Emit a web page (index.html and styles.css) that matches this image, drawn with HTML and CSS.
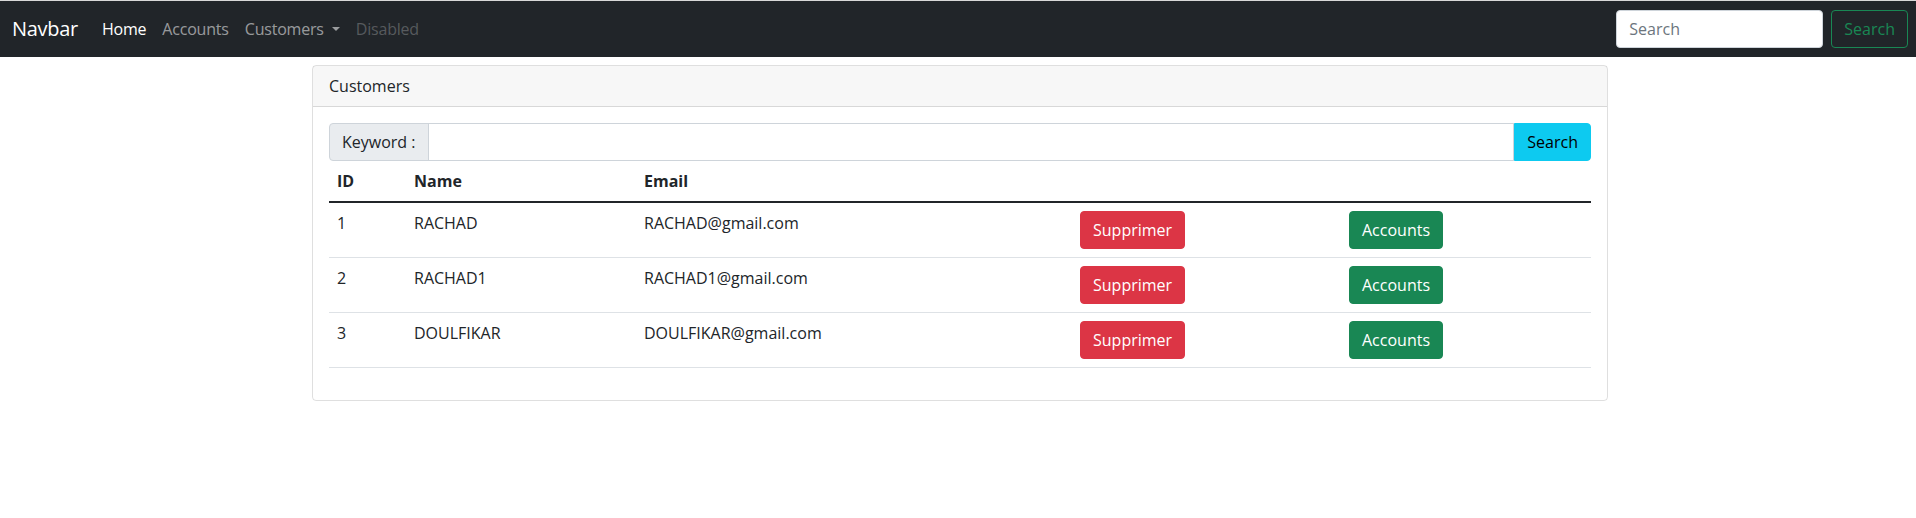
FILE: index.html
```html
<!DOCTYPE html>
<html lang="en">
<head>
  <meta charset="UTF-8">
  <meta name="viewport" content="width=device-width, initial-scale=1.0">
  <title>Customers</title>
  <link rel="stylesheet" href="styles.css">
</head>
<body>

  <nav class="navbar">
    <div class="nav-left">
      <a class="brand" href="#">Navbar</a>
      <ul class="nav-links">
        <li><a class="active" href="#">Home</a></li>
        <li><a href="#">Accounts</a></li>
        <li><a class="dropdown" href="#">Customers</a></li>
        <li><a class="disabled">Disabled</a></li>
      </ul>
    </div>
    <form class="nav-search">
      <input type="search" placeholder="Search">
      <button type="button" class="btn btn-outline-success">Search</button>
    </form>
  </nav>

  <div class="card">
    <div class="card-header">Customers</div>
    <div class="card-body">
      <div class="input-group">
        <span class="input-label">Keyword :</span>
        <input type="text" class="input-field">
        <button type="button" class="btn btn-info">Search</button>
      </div>
      <table class="table">
        <thead>
          <tr>
            <th class="col-id">ID</th>
            <th class="col-name">Name</th>
            <th class="col-email">Email</th>
            <th class="col-del"></th>
            <th class="col-acc"></th>
          </tr>
        </thead>
        <tbody>
          <tr>
            <td>1</td>
            <td>RACHAD</td>
            <td>RACHAD@gmail.com</td>
            <td><button class="btn btn-danger">Supprimer</button></td>
            <td><button class="btn btn-success">Accounts</button></td>
          </tr>
          <tr>
            <td>2</td>
            <td>RACHAD1</td>
            <td>RACHAD1@gmail.com</td>
            <td><button class="btn btn-danger">Supprimer</button></td>
            <td><button class="btn btn-success">Accounts</button></td>
          </tr>
          <tr>
            <td>3</td>
            <td>DOULFIKAR</td>
            <td>DOULFIKAR@gmail.com</td>
            <td><button class="btn btn-danger">Supprimer</button></td>
            <td><button class="btn btn-success">Accounts</button></td>
          </tr>
        </tbody>
      </table>
    </div>
  </div>

</body>
</html>
```

FILE: styles.css
```css
body {
  margin: 0;
  border-top: 1px solid #d8d8d8;
  font-family: "Open Sans", "Liberation Sans", sans-serif;
  font-size: 16px;
  line-height: 1.5;
  color: #212529;
  background-color: #fff;
}
a {
  text-decoration: none;
}
.navbar {
  display: flex;
  align-items: center;
  justify-content: space-between;
  padding: 8px 8px 8px 12px;
  background-color: #212529;
}
.nav-left {
  display: flex;
  align-items: center;
}
.brand {
  margin-right: 16px;
  padding: 5px 0;
  font-size: 20px;
  line-height: 30px;
  letter-spacing: -0.3px;
  color: #fff;
}
.nav-links {
  display: flex;
  margin: 0;
  padding: 0;
  list-style: none;
}
.nav-links a {
  display: block;
  padding: 8px;
  letter-spacing: -0.2px;
  color: rgba(255, 255, 255, 0.55);
}
.nav-links a.active {
  color: #fff;
}
.nav-links a.disabled {
  color: rgba(255, 255, 255, 0.25);
}
.nav-links a.dropdown::after {
  content: "";
  display: inline-block;
  margin-left: 8px;
  vertical-align: 0.255em;
  border-top: 0.3em solid;
  border-right: 0.3em solid transparent;
  border-left: 0.3em solid transparent;
}
.nav-search {
  display: flex;
}
.nav-search input {
  width: 207px;
  margin-right: 8px;
  padding: 6px 12px;
  border: 1px solid #ced4da;
  border-radius: 4px;
  font: inherit;
  color: #212529;
  box-sizing: border-box;
}
.nav-search input::placeholder {
  color: #6c757d;
}
.btn {
  display: inline-block;
  padding: 6px 12px;
  border: 1px solid transparent;
  border-radius: 4px;
  font: inherit;
  line-height: 24px;
  cursor: pointer;
}
.btn-outline-success {
  color: #198754;
  border-color: #198754;
  background-color: transparent;
}
.btn-info {
  color: #000;
  background-color: #0dcaf0;
  border-color: #0dcaf0;
}
.btn-danger {
  color: #fff;
  background-color: #dc3545;
  border-color: #dc3545;
}
.btn-success {
  color: #fff;
  background-color: #198754;
  border-color: #198754;
}
.card {
  width: 1296px;
  margin: 8px 0 0 312px;
  border: 1px solid rgba(0, 0, 0, 0.125);
  border-radius: 4px;
  box-sizing: border-box;
}
.card-header {
  padding: 8px 16px;
  background-color: rgba(0, 0, 0, 0.03);
  border-bottom: 1px solid rgba(0, 0, 0, 0.125);
}
.card-body {
  padding: 16px;
}
.input-group {
  display: flex;
}
.input-label {
  padding: 6px 12px;
  background-color: #e9ecef;
  border: 1px solid #ced4da;
  border-radius: 4px 0 0 4px;
}
.input-field {
  flex: 1;
  margin-left: -1px;
  padding: 6px 12px;
  border: 1px solid #ced4da;
  font: inherit;
}
.input-group .btn {
  border-radius: 0 4px 4px 0;
}
.table {
  width: 100%;
  margin-bottom: 16px;
  border-collapse: collapse;
}
.table th,
.table td {
  padding: 8px;
  text-align: left;
  vertical-align: top;
  border-bottom: 1px solid #dee2e6;
}
.table th {
  font-weight: bold;
}
.table tbody {
  border-top: 2px solid #212529;
}
.col-id {
  width: 61px;
}
.col-name {
  width: 214px;
}
.col-email {
  width: 420px;
}
.col-del {
  width: 253px;
}
.col-acc {
  width: 234px;
}
```
